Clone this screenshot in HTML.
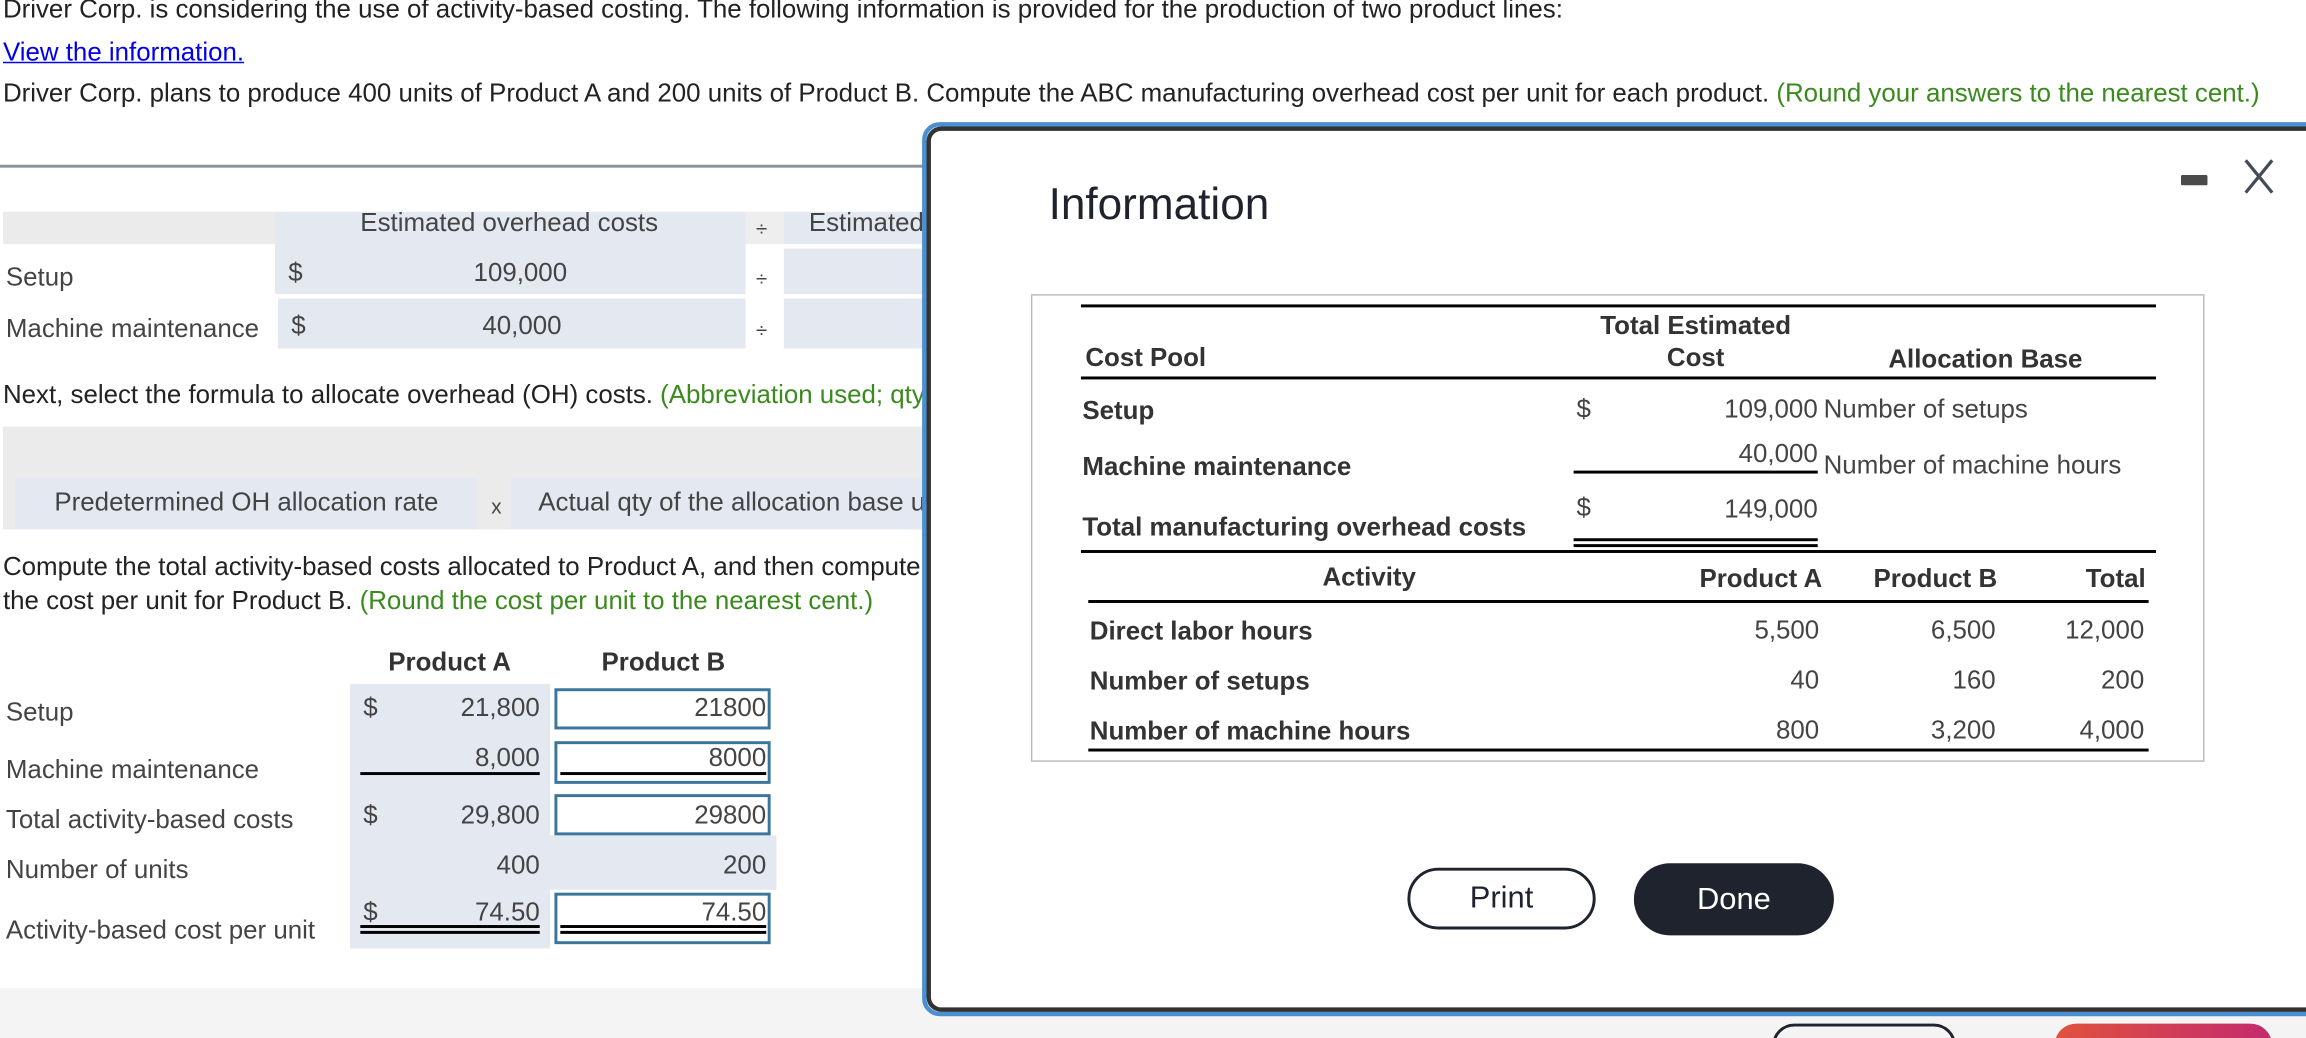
<!DOCTYPE html>
<html><head><meta charset="utf-8"><style>
html,body{margin:0;padding:0;background:#fff;overflow:hidden}
body{width:2306px;height:1038px;position:relative}
#w{position:absolute;left:0;top:0;width:1568px;height:706px;transform:scale(1.47066);transform-origin:0 0;font-family:"Liberation Sans",Arial,sans-serif;font-size:17.6px;color:#222}
.a{position:absolute;white-space:nowrap;line-height:22px}
.g{color:#3b8a1e}
.b{position:absolute}
.d{color:#444}
.r{text-align:right}
.c{text-align:center}
.bd{font-weight:bold;color:#333}
.box{position:absolute;border:2px solid #3a7699;background:#fff;box-sizing:border-box}
</style></head><body><div id="w">
<div class="b" style="left:0;top:672px;width:1568px;height:34px;background:#f4f4f4"></div>
<div class="a" style="left:2px;top:-5px">Driver Corp. is considering the use of activity-based costing. The following information is provided for the production of two product lines:</div>
<div class="a" style="left:2px;top:24px;color:#0000ee;text-decoration:underline">View the information.</div>
<div class="a" style="left:2px;top:52px">Driver Corp. plans to produce 400 units of Product A and 200 units of Product B. Compute the ABC manufacturing overhead cost per unit for each product. <span class="g">(Round your answers to the nearest cent.)</span></div>
<div class="b" style="left:0;top:112px;width:630px;height:2px;background:#8a929c"></div>

<div class="b" style="left:2px;top:144px;width:185px;height:22px;background:#ebebeb"></div>
<div class="b" style="left:187px;top:144px;width:320px;height:56px;background:#e4e8f0"></div>
<div class="b" style="left:507px;top:144px;width:26px;height:22px;background:#eeeeee"></div>
<div class="b" style="left:533px;top:144px;width:97px;height:22px;background:#e4e8f0"></div>
<div class="b" style="left:533px;top:169px;width:97px;height:31px;background:#e4e8f0"></div>
<div class="b" style="left:189px;top:203px;width:318px;height:34px;background:#e4e8f0"></div>
<div class="b" style="left:533px;top:203px;width:97px;height:34px;background:#e4e8f0"></div>
<div class="a d" style="left:245px;top:140px">Estimated overhead costs</div>
<div class="a d" style="left:514px;top:144px;font-size:14px">÷</div>
<div class="a d" style="left:550px;top:140px">Estimated</div>
<div class="a d" style="left:4px;top:177px">Setup</div>
<div class="a d" style="left:196px;top:174px">$</div>
<div class="a d" style="left:322px;top:174px">109,000</div>
<div class="a d" style="left:514px;top:178px;font-size:14px">÷</div>
<div class="a d" style="left:4px;top:212px">Machine maintenance</div>
<div class="a d" style="left:198px;top:210px">$</div>
<div class="a d" style="left:328px;top:210px">40,000</div>
<div class="a d" style="left:514px;top:213px;font-size:14px">÷</div>

<div class="a" style="left:2px;top:257px">Next, select the formula to allocate overhead (OH) costs. <span class="g">(Abbreviation used; qty</span></div>
<div class="b" style="left:2px;top:290px;width:628px;height:70px;background:#ebebeb"></div>
<div class="b" style="left:10px;top:325px;width:315px;height:35px;background:#e4e8f0"></div>
<div class="b" style="left:347px;top:325px;width:283px;height:35px;background:#e4e8f0"></div>
<div class="a d" style="left:37px;top:330px">Predetermined OH allocation rate</div>
<div class="a d" style="left:334px;top:333px;font-size:14px">x</div>
<div class="a d" style="left:366px;top:330px">Actual qty of the allocation base u</div>

<div class="a" style="left:2px;top:374px">Compute the total activity-based costs allocated to Product A, and then compute</div>
<div class="a" style="left:2px;top:397px">the cost per unit for Product B. <span class="g">(Round the cost per unit to the nearest cent.)</span></div>

<div class="a bd" style="left:264px;top:439px">Product A</div>
<div class="a bd" style="left:409px;top:439px">Product B</div>
<div class="b" style="left:238px;top:465px;width:136px;height:180px;background:#e4e8f0"></div>
<div class="b" style="left:374px;top:568px;width:154px;height:37px;background:#e4e8f0"></div>
<div class="box" style="left:377px;top:468px;width:147px;height:28px"></div>
<div class="box" style="left:377px;top:504px;width:147px;height:29px"></div>
<div class="box" style="left:377px;top:540px;width:147px;height:28px"></div>
<div class="box" style="left:377px;top:607px;width:147px;height:35px"></div>
<div class="b" style="left:245px;top:525px;width:122px;height:2px;background:#000"></div>
<div class="b" style="left:381px;top:525px;width:140px;height:2px;background:#000"></div>
<div class="b" style="left:245px;top:629px;width:122px;height:2px;background:#000"></div>
<div class="b" style="left:245px;top:633px;width:122px;height:2px;background:#000"></div>
<div class="b" style="left:381px;top:629px;width:140px;height:2px;background:#000"></div>
<div class="b" style="left:381px;top:633px;width:140px;height:2px;background:#000"></div>

<div class="a d" style="left:4px;top:473px">Setup</div>
<div class="a d" style="left:4px;top:512px">Machine maintenance</div>
<div class="a d" style="left:4px;top:546px">Total activity-based costs</div>
<div class="a d" style="left:4px;top:580px">Number of units</div>
<div class="a d" style="left:4px;top:621px">Activity-based cost per unit</div>
<div class="a d" style="left:247px;top:470px">$</div>
<div class="a d" style="left:247px;top:543px">$</div>
<div class="a d" style="left:247px;top:609px">$</div>
<div class="a d r" style="left:260px;width:107px;top:470px">21,800</div>
<div class="a d r" style="left:260px;width:107px;top:504px">8,000</div>
<div class="a d r" style="left:260px;width:107px;top:543px">29,800</div>
<div class="a d r" style="left:260px;width:107px;top:577px">400</div>
<div class="a d r" style="left:260px;width:107px;top:609px">74.50</div>
<div class="a d r" style="left:400px;width:121px;top:470px">21800</div>
<div class="a d r" style="left:400px;width:121px;top:504px">8000</div>
<div class="a d r" style="left:400px;width:121px;top:543px">29800</div>
<div class="a d r" style="left:400px;width:121px;top:577px">200</div>
<div class="a d r" style="left:400px;width:121px;top:609px">74.50</div>

<div class="b" style="left:627px;top:83px;width:960px;height:608px;border:3px solid #4a8fd0;border-radius:12px;box-sizing:border-box;background:#fff"></div>
<div class="b" style="left:630px;top:86px;width:954px;height:602px;border:3px solid #333;border-radius:10px;box-sizing:border-box;background:#fff"></div>
<div class="a" style="left:713px;top:123px;font-size:30px;line-height:34px;color:#1e232d">Information</div>
<div class="b" style="left:1483px;top:119px;width:18px;height:7px;background:#4a4a4a;border-radius:1px"></div>
<svg class="b" style="left:1525px;top:108px" width="22" height="24" viewBox="0 0 22 24"><path d="M2 1 L20 23 M20 1 L2 23" stroke="#444c58" stroke-width="2.2" fill="none"/></svg>

<div class="b" style="left:701px;top:200px;width:798px;height:318px;border:1px solid #bbb;box-sizing:border-box"></div>
<div class="b" style="left:735px;top:207px;width:731px;height:2px;background:#000"></div>
<div class="a bd c" style="left:1063px;width:180px;top:210px">Total Estimated</div>
<div class="a bd c" style="left:1063px;width:180px;top:232px">Cost</div>
<div class="a bd" style="left:738px;top:232px">Cost Pool</div>
<div class="a bd c" style="left:1250px;width:200px;top:233px">Allocation Base</div>
<div class="b" style="left:735px;top:256px;width:731px;height:2px;background:#000"></div>
<div class="a bd" style="left:736px;top:268px">Setup</div>
<div class="a d" style="left:1072px;top:267px">$</div>
<div class="a d r" style="left:1120px;width:116px;top:267px">109,000</div>
<div class="a d" style="left:1240px;top:267px">Number of setups</div>
<div class="a bd" style="left:736px;top:306px">Machine maintenance</div>
<div class="a d r" style="left:1120px;width:116px;top:297px">40,000</div>
<div class="b" style="left:1070px;top:320px;width:166px;height:2px;background:#000"></div>
<div class="a d" style="left:1240px;top:305px">Number of machine hours</div>
<div class="a bd" style="left:736px;top:347px">Total manufacturing overhead costs</div>
<div class="a d" style="left:1072px;top:334px">$</div>
<div class="a d r" style="left:1120px;width:116px;top:335px">149,000</div>
<div class="b" style="left:1070px;top:366px;width:166px;height:2px;background:#000"></div>
<div class="b" style="left:1070px;top:370px;width:166px;height:2px;background:#000"></div>
<div class="b" style="left:735px;top:374px;width:731px;height:2px;background:#000"></div>
<div class="a bd c" style="left:850px;width:162px;top:381px">Activity</div>
<div class="a bd r" style="left:1129px;width:110px;top:382px">Product A</div>
<div class="a bd r" style="left:1248px;width:110px;top:382px">Product B</div>
<div class="a bd r" style="left:1349px;width:110px;top:382px">Total</div>
<div class="b" style="left:740px;top:408px;width:721px;height:2px;background:#000"></div>
<div class="a bd" style="left:741px;top:418px">Direct labor hours</div>
<div class="a bd" style="left:741px;top:452px">Number of setups</div>
<div class="a bd" style="left:741px;top:486px">Number of machine hours</div>
<div class="a d r" style="left:1137px;width:100px;top:417px">5,500</div>
<div class="a d r" style="left:1257px;width:100px;top:417px">6,500</div>
<div class="a d r" style="left:1358px;width:100px;top:417px">12,000</div>
<div class="a d r" style="left:1137px;width:100px;top:451px">40</div>
<div class="a d r" style="left:1257px;width:100px;top:451px">160</div>
<div class="a d r" style="left:1358px;width:100px;top:451px">200</div>
<div class="a d r" style="left:1137px;width:100px;top:485px">800</div>
<div class="a d r" style="left:1257px;width:100px;top:485px">3,200</div>
<div class="a d r" style="left:1358px;width:100px;top:485px">4,000</div>
<div class="b" style="left:740px;top:509px;width:721px;height:2px;background:#000"></div>

<div class="b c" style="left:957px;top:590px;width:128px;height:42px;border:2px solid #1e232d;border-radius:22px;box-sizing:border-box;line-height:38px;font-size:21px;color:#1e232d">Print</div>
<div class="b c" style="left:1111px;top:587px;width:136px;height:49px;background:#1e232d;border-radius:25px;line-height:49px;font-size:21px;color:#fff">Done</div>

<div class="b" style="left:1205px;top:696px;width:125px;height:30px;border:2px solid #1e232d;border-radius:16px;box-sizing:border-box"></div>
<div class="b" style="left:1397px;top:696px;width:148px;height:30px;border-radius:16px;background:linear-gradient(90deg,#e0523e,#c42a6e)"></div>
</div></body></html>
